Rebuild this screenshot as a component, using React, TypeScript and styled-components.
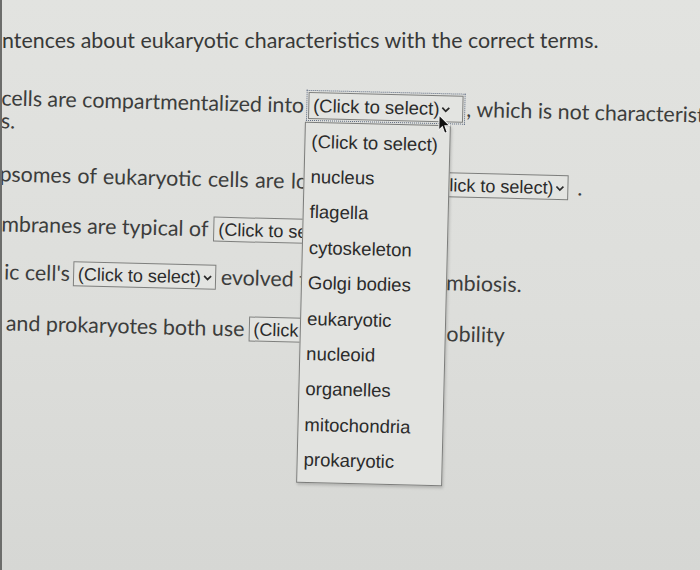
import React from 'react'
import styled, { createGlobalStyle } from 'styled-components'

const GlobalStyle = createGlobalStyle`
  html, body {
    margin: 0;
    padding: 0;
  }
  body {
    background: #dcddda;
    overflow: hidden;
  }
`

const options = [
  '(Click to select)',
  'nucleus',
  'flagella',
  'cytoskeleton',
  'Golgi bodies',
  'eukaryotic',
  'nucleoid',
  'organelles',
  'mitochondria',
  'prokaryotic',
]

const Chevron = () => (
  <svg width="9" height="7" viewBox="0 0 9 7">
    <path d="M1 1.5 L4.5 5 L8 1.5" fill="none" stroke="#2a2a2a" strokeWidth="1.7" />
  </svg>
)

const Cursor = () => (
  <svg width="14" height="21" viewBox="0 0 14 21">
    <path
      d="M1 1 L1 16 L4.5 12.5 L7 19 L9.5 18 L7 11.5 L12 11.5 Z"
      fill="#111"
      stroke="#f2f2f2"
      strokeWidth="1"
    />
  </svg>
)

const App = () => {
  return (
    <Page>
      <GlobalStyle />
      <Title>ntences about eukaryotic characteristics with the correct terms.</Title>
      <Body>
        <Row $top={39}>
          <span>cells are compartmentalized into</span>
          <FocusRing>
            <Select $size={18.5} $h={27} $padR={12}>
              (Click to select)
              <Chevron />
            </Select>
          </FocusRing>
          <span>, which is not characteristic of prokaryotic cells</span>
        </Row>
        <ShortRow>s.</ShortRow>
        <Row $top={30}>
          <Tail $ws={1}>psomes of eukaryotic cells are located in the</Tail>
          <Select $size={18} $h={25}>
            (Click to select)
            <Chevron />
          </Select>
          <Dot>.</Dot>
        </Row>
        <Row $top={20} $indent={3}>
          <span>mbranes are typical of</span>
          <Select $size={18} $h={25} $ml={5}>
            (Click to select)
            <Chevron />
          </Select>
          <span>cells.</span>
        </Row>
        <Row $top={18} $indent={7}>
          <span>ic cell's</span>
          <Select $size={18} $h={25} $ml={3} $mr={5}>
            (Click to select)
            <Chevron />
          </Select>
          <Tail $ws={0}>evolved through endosymbiosis.</Tail>
        </Row>
        <Row $top={21} $indent={10}>
          <span>and prokaryotes both use</span>
          <Select $size={18} $h={25} $ml={4} $mr={0}>
            (Click to select)
            <Chevron />
          </Select>
          <span>&nbsp;for mobility</span>
        </Row>

        <Menu>
          {options.map((o) => (
            <Option key={o}>{o}</Option>
          ))}
        </Menu>
        <Pointer>
          <Cursor />
        </Pointer>
      </Body>
    </Page>
  )
}

export default App

const Pointer = styled.div`
  position: absolute;
  left: 437px;
  top: 60px;
  line-height: 0;
`
const Option = styled.div`
  height: 35.4px;
  display: flex;
  align-items: center;
  padding-left: 6px;
  font-family: 'Liberation Sans', Arial, sans-serif;
  font-size: 18.5px;
  color: #2b2b2b;
  white-space: nowrap;
`
const Menu = styled.div`
  position: absolute;
  left: 304px;
  top: 71px;
  width: 146px;
  height: 361px;
  box-sizing: border-box;
  padding-top: 1px;
  background: #e2e3e0;
  border: 1px solid #7c7d7b;
  box-shadow: 1px 2px 3px rgba(0, 0, 0, 0.18);
`
const Dot = styled.span`
  margin-left: 2px;
`
const Tail = styled.span<{ $ws: number }>`
  word-spacing: ${(p) => p.$ws}px;
`
const Select = styled.span<{ $size: number; $h: number; $ml?: number; $mr?: number; $padR?: number }>`
  display: inline-flex;
  align-items: center;
  gap: 2px;
  height: ${(p) => p.$h}px;
  box-sizing: border-box;
  padding: 2px ${(p) => p.$padR ?? 3}px 0 4px;
  border: 1px solid #7e7f7d;
  background: #e3e4e1;
  font-family: 'Liberation Sans', Arial, sans-serif;
  font-size: ${(p) => p.$size}px;
  color: #2b2b2b;
  margin: 0 ${(p) => p.$mr ?? 7}px 0 ${(p) => p.$ml ?? 5}px;
`
const FocusRing = styled.span`
  display: inline-flex;
  outline: 1px dotted #5d6a80;
  outline-offset: 1px;
  margin: 0 3px 0 4px;
  & > span {
    margin: 0;
  }
`
const ShortRow = styled.div`
  height: 16px;
  line-height: 16px;
  white-space: nowrap;
`
const Row = styled.div<{ $top: number; $indent?: number }>`
  display: flex;
  align-items: center;
  height: 30px;
  margin-top: ${(p) => p.$top}px;
  padding-left: ${(p) => p.$indent ?? 0}px;
  white-space: nowrap;
`
const Body = styled.div`
  position: relative;
  display: flow-root;
  height: 450px;
  margin-left: -5px;
  font-size: 21.4px;
  transform: rotate(1.4deg);
  transform-origin: 355px 231px;
`
const Title = styled.h1`
  margin: 0;
  padding-top: 28px;
  font-size: 21.4px;
  line-height: 24px;
  font-weight: 400;
  white-space: nowrap;
  color: #383938;
`
const Page = styled.div`
  width: 700px;
  height: 570px;
  overflow: hidden;
  box-sizing: border-box;
  border-left: 2px solid #6c6d6b;
  background: linear-gradient(180deg, #e2e3e0 0%, #dddedb 55%, #d6d7d4 100%);
  font-family: Lato, 'Noto Sans', sans-serif;
  color: #3c3d3c;
`
